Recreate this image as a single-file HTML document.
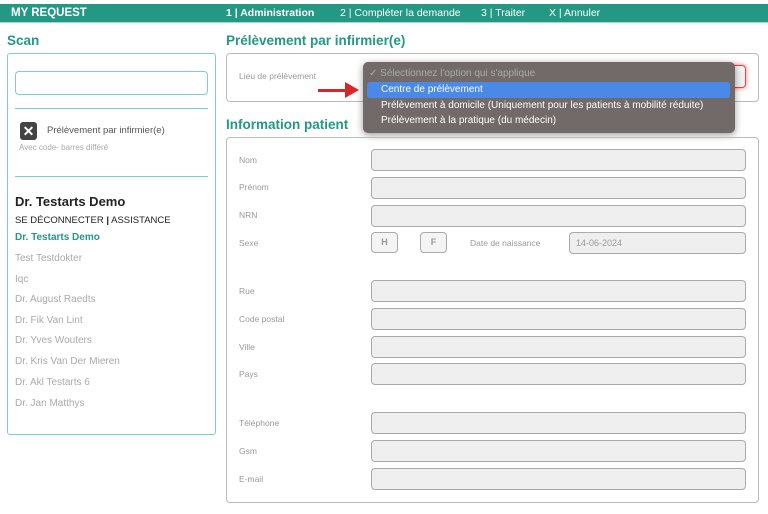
<!DOCTYPE html>
<html><head><meta charset="utf-8"><style>
*{box-sizing:border-box;margin:0;padding:0}
body{width:768px;height:514px;background:#fff;font-family:"Liberation Sans",sans-serif;position:relative;overflow:hidden;color:#333}
.a{position:absolute}
.hdr{left:0;top:4px;width:768px;height:19px;background:#239882;border-bottom:1px solid #9fd8cf}
.hdr span{position:absolute;top:0;line-height:19px;color:#fff;font-size:10.5px}
h2{position:absolute;color:#239882;font-size:13.5px;font-weight:bold}
.box{position:absolute;border:1px solid #bbb;border-radius:4px}
.lbl{position:absolute;left:239px;font-size:8.5px;color:#999}
.inp{position:absolute;left:371px;width:375px;height:22px;background:#efefef;border:1px solid #aaa;border-radius:4px}
.doc{position:absolute;left:15px;font-size:10px;color:#aaa}
.dd{left:363px;top:62px;width:372px;height:71px;background:#726a69;border-radius:5px;box-shadow:0 2px 8px rgba(0,0,0,.4)}
.dd div{position:absolute;left:18px;font-size:10px;color:#fff}
</style></head><body>
<div class="a hdr">
<span style="left:11px;font-weight:bold;font-size:11.5px">MY REQUEST</span>
<span style="left:226px;font-weight:bold">1 | Administration</span>
<span style="left:340px">2 | Compléter la demande</span>
<span style="left:481px">3 | Traiter</span>
<span style="left:549px">X | Annuler</span>
</div>
<h2 style="left:7px;top:33px">Scan</h2>
<div class="a" style="left:7px;top:53px;width:209px;height:382px;border:1px solid #7fcfc3;border-radius:3px"></div>
<div class="a" style="left:15px;top:71px;width:193px;height:24px;border:1px solid #7fcfc3;border-radius:4px"></div>
<div class="a" style="left:15px;top:108px;width:193px;height:1px;background:#7fcfc3"></div>
<div class="a" style="left:20px;top:122px;width:17px;height:18px;background:#444;border-radius:3px;color:#fff;font-weight:bold;font-size:14px;line-height:18px;text-align:center">✕</div>
<div class="a" style="left:47px;top:125px;font-size:9.5px;color:#555">Prélèvement par infirmier(e)</div>
<div class="a" style="left:19px;top:143px;font-size:8px;color:#aaa">Avec code- barres différé</div>
<div class="a" style="left:15px;top:176px;width:193px;height:1px;background:#7fcfc3"></div>
<div class="a" style="left:15px;top:194px;font-size:13px;font-weight:bold;color:#222">Dr. Testarts Demo</div>
<div class="a" style="left:15px;top:215px;font-size:9.5px;color:#222">SE DÉCONNECTER <b>|</b> ASSISTANCE</div>
<div class="a" style="left:15px;top:232px;font-size:10px;font-weight:bold;color:#239882">Dr. Testarts Demo</div>
<div class="doc" style="top:253px">Test Testdokter</div>
<div class="doc" style="top:274px">Iqc</div>
<div class="doc" style="top:294px">Dr. August Raedts</div>
<div class="doc" style="top:315px">Dr. Fik Van Lint</div>
<div class="doc" style="top:335px">Dr. Yves Wouters</div>
<div class="doc" style="top:356px">Dr. Kris Van Der Mieren</div>
<div class="doc" style="top:377px">Dr. Akl Testarts 6</div>
<div class="doc" style="top:398px">Dr. Jan Matthys</div>

<h2 style="left:226px;top:33px">Prélèvement par infirmier(e)</h2>
<div class="box" style="left:226px;top:53px;width:533px;height:49px"></div>
<div class="lbl" style="top:71px">Lieu de prélèvement</div>
<div class="a" style="left:370px;top:65px;width:376px;height:23px;border:1px solid #e44;border-radius:4px;box-shadow:0 0 4px #f66;background:#f2f2f2"></div>
<div class="a" style="left:318px;top:89px;width:30px;height:3px;background:#d9262b"></div>
<div class="a" style="left:345px;top:82px;width:0;height:0;border-left:14px solid #d9262b;border-top:8px solid transparent;border-bottom:8px solid transparent"></div>
<div class="a dd">
<div style="top:6px;left:6px;color:#aaa">✓ Sélectionnez l'option qui s'applique</div>
<div style="top:20px;left:4px;width:363px;height:16px;background:#4a8ae6;border-radius:3px"></div>
<div style="top:22px">Centre de prélèvement</div>
<div style="top:38px">Prélèvement à domicile (Uniquement pour les patients à mobilité réduite)</div>
<div style="top:53px">Prélèvement à la pratique (du médecin)</div>
</div>

<h2 style="left:226px;top:117px">Information patient</h2>
<div class="box" style="left:226px;top:137px;width:533px;height:366px"></div>
<div class="lbl" style="top:155px">Nom</div><div class="inp" style="top:149px"></div>
<div class="lbl" style="top:182px">Prénom</div><div class="inp" style="top:177px"></div>
<div class="lbl" style="top:210px">NRN</div><div class="inp" style="top:205px"></div>
<div class="lbl" style="top:238px">Sexe</div>
<div class="a" style="left:371px;top:232px;width:27px;height:21px;border:1px solid #aaa;border-radius:4px;background:#f4f4f4;font-size:9px;color:#999;text-align:center;line-height:19px;font-weight:bold">H</div>
<div class="a" style="left:420px;top:232px;width:27px;height:21px;border:1px solid #aaa;border-radius:4px;background:#f4f4f4;font-size:9px;color:#999;text-align:center;line-height:19px;font-weight:bold">F</div>
<div class="a" style="left:470px;top:238px;font-size:8.5px;color:#999">Date de naissance</div>
<div class="a" style="left:569px;top:232px;width:177px;height:22px;background:#efefef;border:1px solid #aaa;border-radius:4px;font-size:9px;color:#999;padding:5px 0 0 6px">14-06-2024</div>
<div class="lbl" style="top:286px">Rue</div><div class="inp" style="top:280px"></div>
<div class="lbl" style="top:314px">Code postal</div><div class="inp" style="top:308px"></div>
<div class="lbl" style="top:342px">Ville</div><div class="inp" style="top:336px"></div>
<div class="lbl" style="top:369px">Pays</div><div class="inp" style="top:363px"></div>
<div class="lbl" style="top:418px">Téléphone</div><div class="inp" style="top:412px"></div>
<div class="lbl" style="top:446px">Gsm</div><div class="inp" style="top:440px"></div>
<div class="lbl" style="top:474px">E-mail</div><div class="inp" style="top:468px"></div>
</body></html>
